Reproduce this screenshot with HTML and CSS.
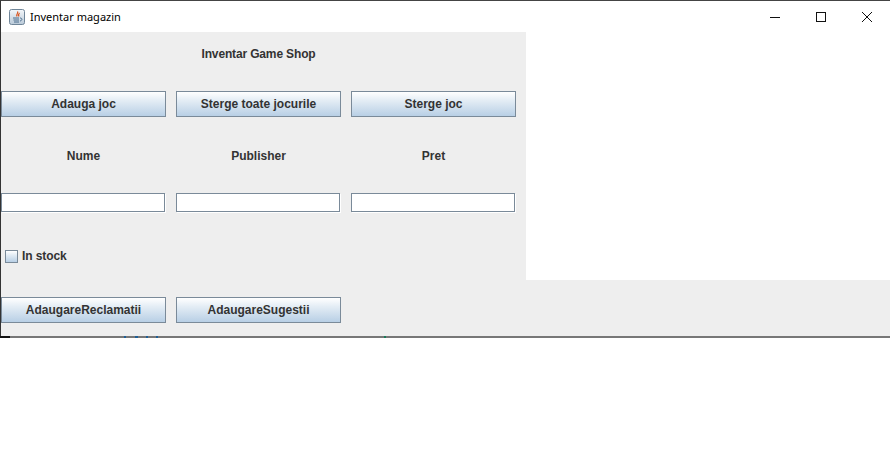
FILE: index.html
```html
<!DOCTYPE html>
<html lang="en">
<head>
  <meta charset="UTF-8">
  <title>Inventar magazin</title>
  <link rel="stylesheet" href="styles.css">
</head>
<body>
  <div class="window">
    <!-- Title bar -->
    <div class="titlebar">
      <svg class="app-icon" width="16" height="16" viewBox="0 0 16 16">
        <defs>
          <linearGradient id="iconbg" x1="0" y1="0" x2="0" y2="1">
            <stop offset="0" stop-color="#f4f7fa"/>
            <stop offset="1" stop-color="#b9c9d8"/>
          </linearGradient>
        </defs>
        <rect x="0.5" y="0.5" width="15" height="15" rx="2" fill="url(#iconbg)" stroke="#6f8598"/>
        <path d="M8.500 2.500 C10 4 6.500 5 8 7.500 M10.500 4 C9.500 5 9 6 10 7.500" fill="none" stroke="#d9541e" stroke-width="1.200"/>
        <path d="M4 9 H10 M4.500 11 H10 M5 13 H10" stroke="#4a6c8c" stroke-width="1"/>
        <path d="M11 9 C13.500 9 13.500 11.500 11 12" fill="none" stroke="#4a6c8c" stroke-width="1"/>
      </svg>
      <span class="title-text">Inventar magazin</span>
      <div class="window-controls">
        <svg class="control" width="46" height="31" viewBox="0 0 46 31"><path d="M18 16.500 H28" stroke="#111" fill="none"/></svg>
        <svg class="control" width="46" height="31" viewBox="0 0 46 31"><rect x="18.500" y="11.500" width="9" height="9" stroke="#111" fill="none"/></svg>
        <svg class="control" width="46" height="31" viewBox="0 0 46 31"><path d="M18 11 L28 21 M28 11 L18 21" stroke="#111" fill="none"/></svg>
      </div>
    </div>

    <!-- Main form -->
    <div class="form-panel">
      <div class="form-grid">
        <div></div>
        <div class="label heading">Inventar Game Shop</div>
        <div></div>

        <button class="btn">Adauga joc</button>
        <button class="btn">Sterge toate jocurile</button>
        <button class="btn">Sterge joc</button>

        <div class="label">Nume</div>
        <div class="label">Publisher</div>
        <div class="label">Pret</div>

        <input class="field" type="text">
        <input class="field" type="text">
        <input class="field" type="text">

        <label class="stock">
          <span class="checkbox"></span>
          In stock
        </label>
      </div>
    </div>

    <!-- Bottom bar -->
    <div class="bottom-bar">
      <button class="btn">AdaugareReclamatii</button>
      <button class="btn">AdaugareSugestii</button>
    </div>
  </div>

  <!-- Window edge, with bits of what lies behind it -->
  <div class="below">
    <span class="corner"></span>
    <span class="speck speck-a"></span>
    <span class="speck speck-b"></span>
    <span class="speck speck-c"></span>
    <span class="speck speck-d"></span>
    <span class="speck speck-e"></span>
  </div>
</body>
</html>
```

FILE: styles.css
```css
/* Global Styles */
html, body {
  margin: 0;
  height: 100%;
  background: #fff;
  overflow: hidden;
}

body {
  font-family: "Liberation Sans", Arial, sans-serif;
  font-size: 12px;
  color: #333;
}

.window {
  height: 336px;
  box-sizing: border-box;
  border-top: 1px solid #444;
  border-left: 1px solid #333;
  display: flex;
  flex-direction: column;
  background: #eee;
}

/* Title bar */
.titlebar {
  height: 31px;
  flex: none;
  display: flex;
  align-items: center;
  background: #fff;
  padding-left: 8px;
}

.app-icon {
  margin-right: 5px;
}

.title-text {
  font-family: "Noto Sans", sans-serif;
  font-size: 11px;
  color: #000;
}

.window-controls {
  margin-left: auto;
  display: flex;
}

.control {
  display: block;
}

/* Form */
.form-panel {
  height: 248px;
  flex: none;
  display: flex;
  background: #fff;
}

.form-grid {
  width: 515px;
  padding-right: 10px;
  background: #eee;
  display: grid;
  grid-template-columns: repeat(3, 165px);
  grid-template-rows: 44px 56px 48px 45px 55px;
  column-gap: 10px;
  align-items: center;
}

.label {
  text-align: center;
  font-weight: bold;
  white-space: nowrap;
}

.heading {
  letter-spacing: -0.15px;
}

.btn {
  height: 26px;
  width: 165px;
  box-sizing: border-box;
  padding: 0;
  border: 1px solid #7a8a99;
  background: linear-gradient(to bottom, #fff 0%, #e4edf5 35%, #b8cfe5 100%);
  font-family: "Liberation Sans", Arial, sans-serif;
  font-size: 12px;
  font-weight: bold;
  color: #333;
}

.field {
  width: 164px;
  height: 19px;
  box-sizing: border-box;
  padding: 0;
  border: 1px solid #7a8a99;
  background: #fff;
  box-shadow: 1px 1px 0 #fff;
}

.stock {
  display: flex;
  align-items: center;
  gap: 4px;
  padding: 7px 0 0 4px;
  font-weight: bold;
  white-space: nowrap;
  letter-spacing: -0.1px;
}

.checkbox {
  width: 11px;
  height: 11px;
  border: 1px solid #7a8a99;
  background: linear-gradient(to bottom, #fff 0%, #e4edf5 35%, #b8cfe5 100%);
}

/* Bottom bar */
.bottom-bar {
  flex: 1;
  display: flex;
  align-items: center;
  gap: 10px;
  padding-top: 4px;
  box-sizing: border-box;
  background: #eee;
}

/* Below the window */
.below {
  height: 2px;
  background: #777;
  display: flex;
}

.corner {
  width: 10px;
  background: #111;
}

.speck {
  width: 2px;
  background: #1f5f96;
}

.speck-a {
  margin-left: 114px;
}

.speck-b {
  width: 3px;
  margin-left: 9px;
}

.speck-c,
.speck-d {
  margin-left: 8px;
}

.speck-e {
  margin-left: 226px;
  background: #1a7a5a;
}
```
